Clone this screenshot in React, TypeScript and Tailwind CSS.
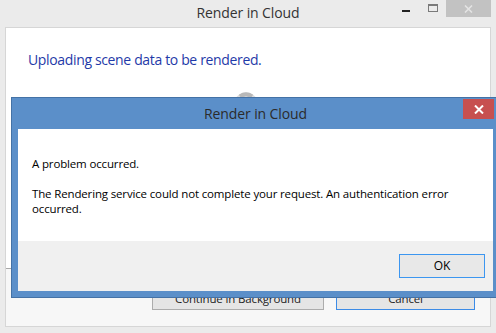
import React from "react";

const font = { fontFamily: '"Open Sans", "Noto Sans", sans-serif' };

const BackgroundWindow = () => {
  return (
    <div className="flex h-full flex-col bg-[#ebebeb]">
      {/* Title bar */}
      <div className="relative flex h-[27px] items-center justify-center pb-[3px]">
        <span className="text-[14px] tracking-[-0.1px] text-[#333333]">Render in Cloud</span>
        <div className="absolute right-[5px] top-0 flex items-start">
          <div className="mr-[18px] mt-[10px] h-[2px] w-[8px] bg-[#222222]" />
          <div className="mr-[8px] mt-[4px] h-[8px] w-[10px] border border-t-2 border-[#7a7a7a]" />
          <div className="flex h-[17px] w-[45px] items-center justify-center bg-[#c2c2c2]">
            <svg width="9" height="8" viewBox="0 0 9 8">
              <path d="M1 0.5 L8 7.5 M8 0.5 L1 7.5" stroke="#e4e4e4" strokeWidth="1.6" />
            </svg>
          </div>
        </div>
      </div>

      {/* Panel */}
      <div className="mx-[5px] flex h-[300px] flex-col border border-[#d6d6d6]">
        <div className="relative flex-1 bg-white pl-[22px] pt-[21px]">
          <p className="text-[14px] tracking-[-0.35px] text-[#1f3aa8]">Uploading scene data to be rendered.</p>
          <div className="absolute left-[227px] top-[64px]">
            <svg width="26" height="26" viewBox="0 0 26 26">
              <circle cx="13" cy="13" r="10.5" fill="none" stroke="#dedede" strokeWidth="4" />
              <path d="M7 4.5 A10.5 10.5 0 0 1 19 4.5" fill="none" stroke="#b8b8b8" strokeWidth="4" />
            </svg>
          </div>
        </div>
        <div className="flex h-[58px] items-end justify-end gap-[12px] border-t border-[#a8a8a8] bg-[#f7f7f7] pb-[16px] pr-[15px]">
          <button className="h-[23px] w-[172px] border border-[#acacac] bg-[#e5e5e5] text-[11.5px] tracking-[-0.15px] text-[#222]">
            Continue in Background
          </button>
          <button className="h-[23px] w-[139px] border border-[#3c8be6] bg-[#e5e5e5] text-[11.5px] tracking-[-0.15px] text-[#222]">
            Cancel
          </button>
        </div>
      </div>
    </div>
  );
};

const ErrorDialog = () => {
  return (
    <div className="absolute left-[11px] top-[97px] flex h-[201px] w-[489px] flex-col border border-[#4472a6] bg-[#5b8fc9] px-[6px] pb-[6px]">
      <div className="relative flex h-[31px] items-center justify-center">
        <span className="text-[14px] tracking-[-0.1px] text-[#2b2b2b]">Render in Cloud</span>
        <div className="absolute right-[-1px] top-[1px] flex h-[20px] w-[31px] items-center justify-center bg-[#c75050]">
          <svg width="10" height="9" viewBox="0 0 10 9">
            <path d="M1 0.5 L9 8.5 M9 0.5 L1 8.5" stroke="#ffffff" strokeWidth="2" />
          </svg>
        </div>
      </div>
      <div className="flex flex-1 flex-col">
        <div className="h-[112px] bg-white pl-[14px] pt-[27px] text-[11.5px] leading-[15px] tracking-[-0.15px] text-black">
          <p>A problem occurred.</p>
          <p className="mt-[15px] w-[440px]">
            The Rendering service could not complete your request. An authentication error occurred.
          </p>
        </div>
        <div className="flex flex-1 justify-end bg-[#f0f0f0] pr-[8px] pt-[13px]">
          <button className="h-[24px] w-[86px] border border-[#3c96f0] bg-[#e8e8e8] text-[12px] text-black">
            OK
          </button>
        </div>
      </div>
    </div>
  );
};

export default function App() {
  return (
    <div className="relative h-[333px] w-[496px] overflow-hidden" style={font}>
      <BackgroundWindow />
      <ErrorDialog />
    </div>
  );
}
